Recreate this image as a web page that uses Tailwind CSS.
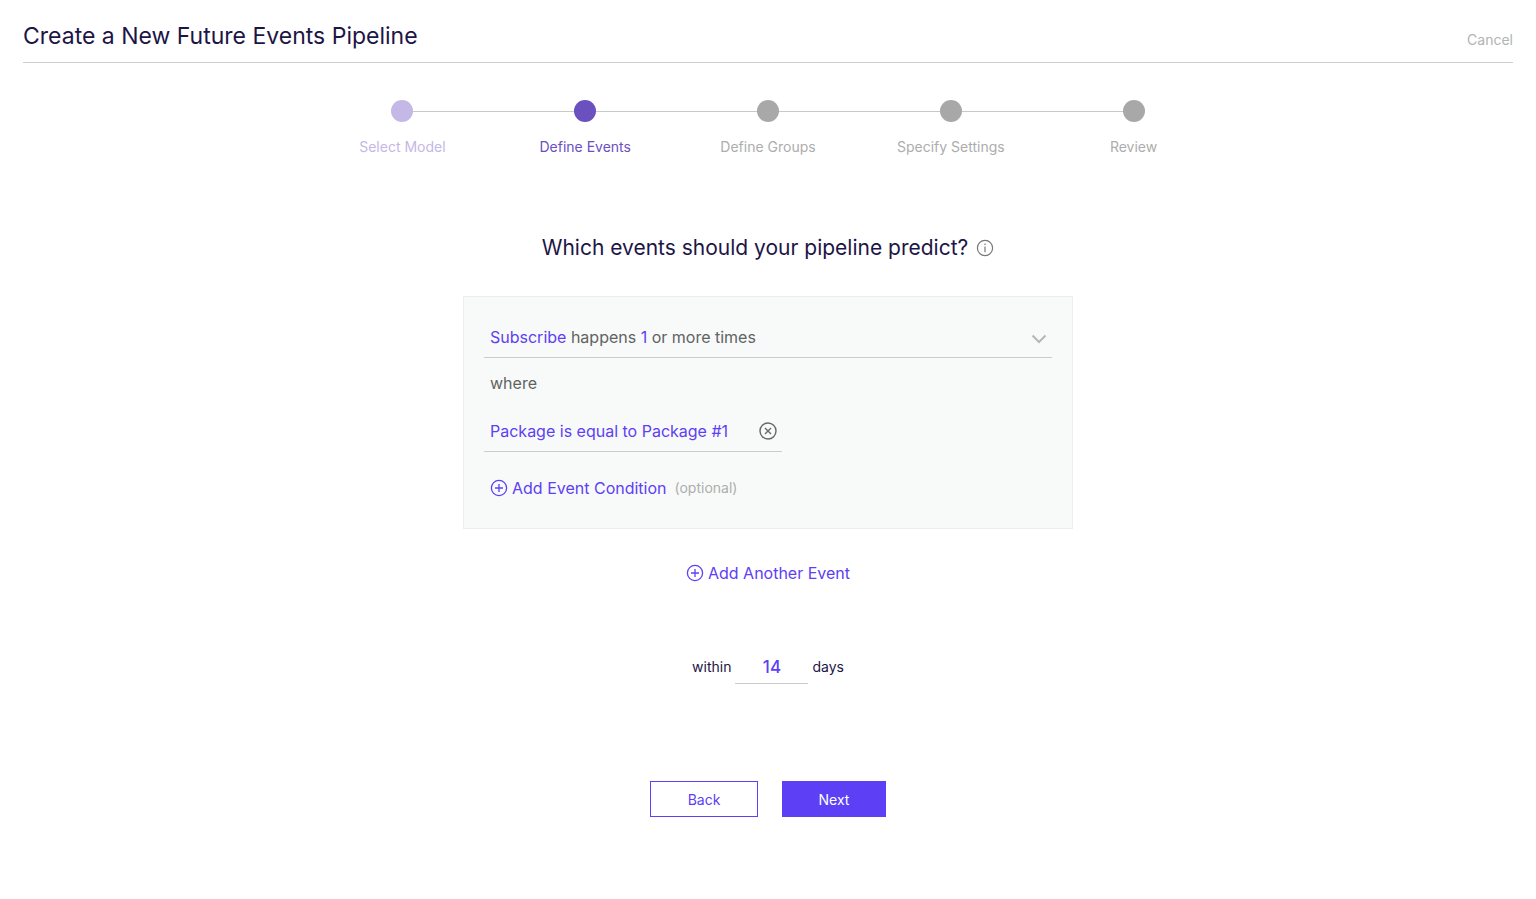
<!DOCTYPE html>
<html lang="en">
    <head>
        <meta charset="UTF-8">
        <meta name="viewport" content="width=device-width, initial-scale=1.0">
        <title>Create a New Future Events Pipeline</title>
        <script src="https://cdn.jsdelivr.net/npm/@tailwindcss/browser@4"></script>
    </head>
    <body class="bg-white text-[#1d1546] text-[14px] font-['Inter',sans-serif]">

        <header class="mx-[23px] flex h-[63px] items-end justify-between border-b border-[#cbd0ce] pb-3">
            <h1 class="text-[23px] leading-7">Create a New Future Events Pipeline</h1>
            <a href="#" class="leading-5 text-[#b3b3b3]">Cancel</a>
        </header>


        <main class="flex flex-col items-center">

            <!-- Steps -->
            <ol class="mt-[37px] grid w-full max-w-[914px] grid-cols-5 text-center leading-5 text-[#adadad]">
                <li>
                    <div class="flex items-center">
                        <span class="h-px flex-1"></span>
                        <span class="size-[22px] rounded-full bg-[#c4b8e6]"></span>
                        <span class="h-px flex-1 bg-[#c5cac8]"></span>
                    </div>
                    <div class="mt-[15px] text-[#c4b8e6]">Select Model</div>
                </li>
                <li aria-current="step">
                    <div class="flex items-center">
                        <span class="h-px flex-1 bg-[#c5cac8]"></span>
                        <span class="size-[22px] rounded-full bg-[#6b50bf]"></span>
                        <span class="h-px flex-1 bg-[#c5cac8]"></span>
                    </div>
                    <div class="mt-[15px] text-[#6b50bf]">Define Events</div>
                </li>
                <li>
                    <div class="flex items-center">
                        <span class="h-px flex-1 bg-[#c5cac8]"></span>
                        <span class="size-[22px] rounded-full bg-[#a8a8a8]"></span>
                        <span class="h-px flex-1 bg-[#c5cac8]"></span>
                    </div>
                    <div class="mt-[15px]">Define Groups</div>
                </li>
                <li>
                    <div class="flex items-center">
                        <span class="h-px flex-1 bg-[#c5cac8]"></span>
                        <span class="size-[22px] rounded-full bg-[#a8a8a8]"></span>
                        <span class="h-px flex-1 bg-[#c5cac8]"></span>
                    </div>
                    <div class="mt-[15px]">Specify Settings</div>
                </li>
                <li>
                    <div class="flex items-center">
                        <span class="h-px flex-1 bg-[#c5cac8]"></span>
                        <span class="size-[22px] rounded-full bg-[#a8a8a8]"></span>
                        <span class="h-px flex-1"></span>
                    </div>
                    <div class="mt-[15px]">Review</div>
                </li>
            </ol>
            <!-- /Steps -->


            <div class="mt-[75px] flex items-center gap-2">
                <h2 class="text-[21px] leading-8">Which events should your pipeline predict?</h2>
                <button type="button" aria-label="More info">
                    <svg class="size-[18px]" viewBox="0 0 18 18" fill="none" stroke="#777777" stroke-width="1.2">
                        <circle cx="9" cy="9" r="7.6"/>
                        <path d="M9 7.4V13.2"/>
                        <circle cx="9" cy="5.2" r="0.8" fill="#777777" stroke="none"/>
                    </svg>
                </button>
            </div>


            <!-- Event -->
            <section class="mt-8 w-full max-w-[610px] border border-[#ebeeed] bg-[#f8faf9] px-5 pt-[19px] pb-7 text-[16px] leading-6 text-[#606362]">
                <button type="button" class="flex h-[42px] w-full items-center justify-between border-b border-[#c9cdcb] pr-1 pl-1.5">
                    <span><span class="text-[#5d40f5]">Subscribe</span> happens <span class="text-[#5d40f5]">1</span> or more times</span>
                    <svg class="size-[18px]" viewBox="0 0 18 18" fill="none" stroke="#b4b6bc" stroke-width="2">
                        <path d="M2.5 7.5L9 14L15.5 7.5"/>
                    </svg>
                </button>

                <div class="mt-[13px] px-1.5">where</div>

                <div class="mt-[15px] flex h-[42px] w-[298px] max-w-full items-center justify-between border-b border-[#c9cdcb] pr-1 pl-1.5">
                    <button type="button" class="text-[#5d40f5]">Package is equal to Package #1</button>
                    <button type="button" aria-label="Remove condition">
                        <svg class="size-5" viewBox="0 0 20 20" fill="none" stroke="#666968" stroke-width="1.4">
                            <circle cx="10" cy="10" r="8"/>
                            <path d="M7 7L13 13M13 7L7 13"/>
                        </svg>
                    </button>
                </div>

                <div class="mt-6 flex items-center gap-2 px-1.5">
                    <button type="button" class="flex items-center gap-1 text-[#5d40f5]">
                        <svg class="size-[18px]" viewBox="1 1 18 18" fill="none" stroke="#5d40f5" stroke-width="1.3">
                            <circle cx="10" cy="10" r="7.6"/>
                            <path d="M10 6V14M6 10H14"/>
                        </svg>
                        Add Event Condition
                    </button>
                    <span class="text-[14px] text-[#adadad]">(optional)</span>
                </div>
            </section>
            <!-- /Event -->


            <button type="button" class="mt-8 flex items-center gap-1 text-[16px] leading-6 text-[#5d40f5]">
                <svg class="size-[18px]" viewBox="1 1 18 18" fill="none" stroke="#5d40f5" stroke-width="1.3">
                    <circle cx="10" cy="10" r="7.6"/>
                    <path d="M10 6V14M6 10H14"/>
                </svg>
                Add Another Event
            </button>

            <div class="mt-[65px] flex items-center gap-1 leading-8">
                <label for="days">within</label>
                <input id="days" type="text" inputmode="numeric" value="14" class="h-[34px] w-[73px] border-b border-[#c9cdcb] text-center text-[17px] font-medium text-[#5d40f5]">
                <span>days</span>
            </div>

            <!-- Buttons -->
            <div class="mt-[97px] mb-20 flex gap-6">
                <button type="button" class="h-9 w-[108px] border border-[#5d40f5] text-[#5d40f5]">Back</button>
                <button type="button" class="h-9 w-[104px] bg-[#5d40f5] text-white">Next</button>
            </div>

        </main>

    </body>
</html>
